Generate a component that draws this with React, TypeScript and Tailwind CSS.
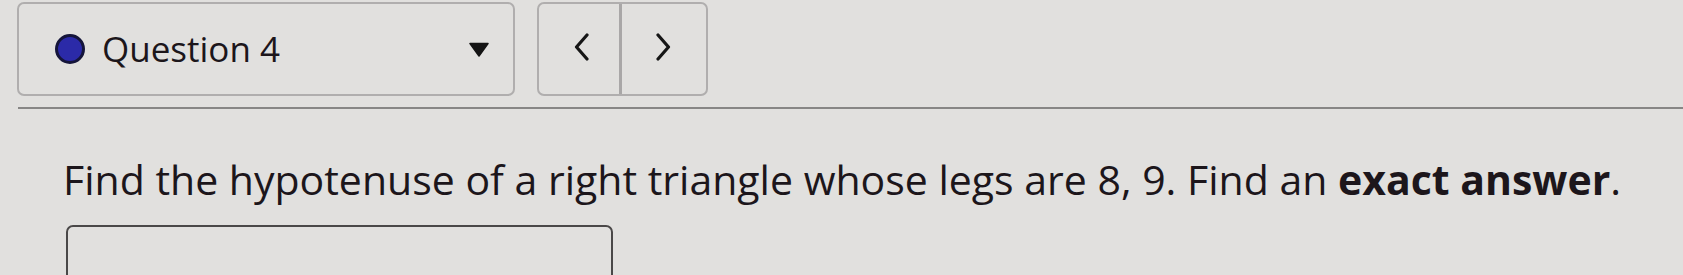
import React from "react";

export default function App() {
  return (
    <div
      className="w-full h-[275px] overflow-hidden bg-[#e1e0de] text-[#1c161b]"
      style={{ fontFamily: '"Open Sans", "Noto Sans", sans-serif' }}
    >
      <div className="flex items-start pl-[17px] pt-[2px]">
        <div className="w-[498px] h-[94px] border-2 border-[#b0aeae] rounded-[7px] flex items-center pl-[36px] pr-[24px]">
          <span className="w-[30px] h-[30px] rounded-full bg-[#2b2aa8] border-[3px] border-[#15153a] shrink-0" />
          <span className="ml-[17px] text-[35px] leading-none mt-[-2px]">Question 4</span>
          <span className="ml-auto">
            <svg width="20" height="15" viewBox="0 0 20 15">
              <path d="M1 1.5 H19 L10 14 Z" fill="#141414" stroke="#141414" strokeWidth="1.5" strokeLinejoin="round" />
            </svg>
          </span>
        </div>
        <div className="ml-[22px] w-[171px] h-[94px] border-2 border-[#b0aeae] rounded-[7px] flex">
          <div className="w-[83px] h-full border-r-[3px] border-[#a9a7a7] flex items-center justify-center pl-[4px] pb-[4px]">
            <svg width="17" height="28" viewBox="0 0 17 28">
              <path d="M14 2 L3.5 14 L14 26" fill="none" stroke="#161616" strokeWidth="3.2" strokeLinecap="round" strokeLinejoin="round" />
            </svg>
          </div>
          <div className="flex-1 h-full flex items-center justify-center pr-[2px] pb-[4px]">
            <svg width="17" height="28" viewBox="0 0 17 28">
              <path d="M3 2 L13.5 14 L3 26" fill="none" stroke="#161616" strokeWidth="3.2" strokeLinecap="round" strokeLinejoin="round" />
            </svg>
          </div>
        </div>
      </div>
      <div className="ml-[18px] mt-[11px] h-[2px] bg-[#878685]" />
      <div className="pl-[63px] mt-[50px] text-[41px] leading-none whitespace-nowrap">
        Find the hypotenuse of a right triangle whose legs are 8, 9. Find an <b className="font-bold">exact answer</b>.
      </div>
      <div className="ml-[66px] mt-[25px] w-[547px] h-[80px] border-2 border-[#4a4848] rounded-[7px]" />
    </div>
  );
}
